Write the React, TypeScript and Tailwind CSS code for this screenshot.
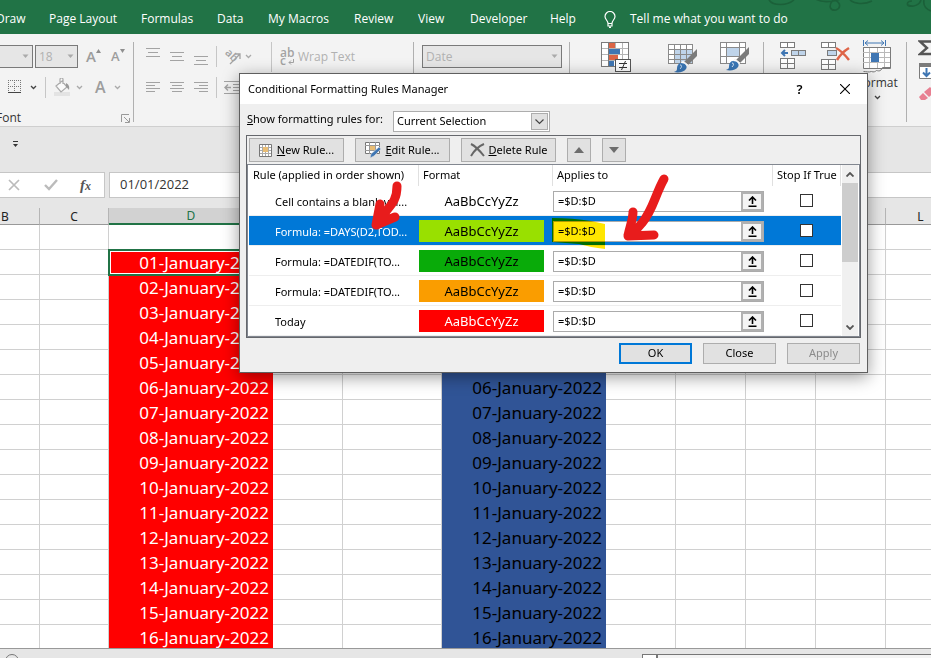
import React from 'react';
import clsx from 'clsx';

const rules = [
  { name: 'Cell contains a blank val...', swatch: 'bg-white text-black', selected: false },
  { name: 'Formula: =DAYS(D2,TOD...', swatch: 'bg-[#99e000] text-black', selected: true },
  { name: 'Formula: =DATEDIF(TO...', swatch: 'bg-[#09ab09] text-black', selected: false },
  { name: 'Formula: =DATEDIF(TO...', swatch: 'bg-[#fa9d00] text-black', selected: false },
  { name: 'Today', swatch: 'bg-[#ff0000] text-white', selected: false },
];

const dates = Array.from({ length: 16 }, (_, i) => `${String(i + 1).padStart(2, '0')}-January-2022`);

const tabs = ['Draw', 'Page Layout', 'Formulas', 'Data', 'My Macros', 'Review', 'View', 'Developer', 'Help'];

function Chevron({ dark = false }: { dark?: boolean }) {
  return (
    <svg width="7" height="5" viewBox="0 0 7 5" fill="none" stroke={dark ? '#444' : '#aaa'} strokeWidth="1.3">
      <path d="M1 1l2.5 2.5L6 1" />
    </svg>
  );
}

function SmallTriangle() {
  return (
    <svg className="pointer-events-none absolute right-1 top-[9px]" width="7" height="5" viewBox="0 0 7 5">
      <path d="M0.500 0.500h6L3.500 4z" fill="#aaa" />
    </svg>
  );
}

function Lines({ rows, top }: { rows: number[][]; top: number }) {
  return (
    <svg width="14" height="22" viewBox="0 0 14 22" stroke="#a3a3a3" shapeRendering="crispEdges">
      {rows.map(([a, b], i) => (
        <path key={i} d={`M${a} ${top + i * 4 - (rows.length > 3 ? i : 0)}.5H${b}`} />
      ))}
    </svg>
  );
}

function Brush() {
  return (
    <>
      <path d="M29 5v7l-9 9-4-3z" fill="#7b7b7b" />
      <path d="M15 17l5 4-2 2-5-4z" fill="#fff" stroke="#f3f3f3" />
      <path d="M13 19c4 0 7 3 5 6-2 3-7 4-12 3 3-1 3-2 3-4 0-3 2-5 4-5z" fill="#3a76b5" />
      <path d="M12 21c2 0 2 2 0 4" fill="none" stroke="#dce9f6" />
    </>
  );
}

function Separator() {
  return <div className="my-1 w-px shrink-0 self-stretch bg-[#b0b0b0]" />;
}

function FontGroup() {
  return (
    <section className="relative flex w-[133px] shrink-0 flex-col pt-[7px]" aria-label="Font">
      <div className="flex h-[23px]">
        <div className="relative w-[33px]">
          <select aria-label="Font name" className="block h-full w-full appearance-none border border-l-0 border-[#7a7a7a] bg-[#e6e6e6]" />
          <SmallTriangle />
        </div>
        <div className="relative ml-[2px] w-[43px]">
          <select aria-label="Font size" className="block h-full w-full appearance-none border border-[#7a7a7a] bg-[#e6e6e6] pl-[3px] text-xs text-[#b1b1b1]">
            <option>18</option>
          </select>
          <SmallTriangle />
        </div>
        <button aria-label="Increase font size" className="ml-2 flex items-center text-[15px] font-semibold text-[#9d9d9d]">
          A
          <svg className="mb-3" width="5" height="4" viewBox="0 0 5 4"><path d="M0 4L2.500 0 5 4z" fill="#8f8f8f" /></svg>
        </button>
        <button aria-label="Decrease font size" className="ml-[10px] flex items-center text-[13px] font-semibold text-[#9d9d9d]">
          A
          <svg className="mb-3" width="5" height="4" viewBox="0 0 5 4"><path d="M0 0h5L2.500 4z" fill="#8f8f8f" /></svg>
        </button>
      </div>
      <div className="mt-2 flex h-[22px] items-center pl-2">
        <button aria-label="Borders" className="flex items-center gap-[8px]">
          <svg width="14" height="14" viewBox="0 0 14 14" fill="none" stroke="#777" shapeRendering="crispEdges">
            <path d="M.5 0v13M6.500 0v13M12.500 0v13M0 .5h13M0 6.500h13" strokeDasharray="1 1" />
            <path d="M0 12.500h13" stroke="#444" />
          </svg>
          <Chevron dark />
        </button>
        <div className="ml-2 h-[21px] w-px bg-[#c6c6c6]" />
        <button aria-label="Fill colour" className="ml-2 flex items-center gap-[6px]">
          <svg width="16" height="18" viewBox="0 0 16 18">
            <path d="M0 14h16v4H0z" fill="#e3e3e3" />
            <path d="M2 8l6-5 5 6-6 5zM6 6V1.500a1.500 1.500 0 013 0V6" fill="#fafafa" stroke="#aaa" strokeWidth="1.200" />
            <path d="M12 5c2 1 4 3 3 7-1-1-2-3-3-3z" fill="#999" />
          </svg>
          <Chevron />
        </button>
        <button aria-label="Font colour" className="ml-[12px] flex items-center gap-[8px] text-base font-semibold text-[#9d9d9d]">
          A
          <Chevron />
        </button>
      </div>
      <div className="-ml-1 mt-3 flex h-4 items-center justify-between pr-[3px] text-xs text-[#333]">
        Font
        <svg width="9" height="9" viewBox="0 0 9 9" fill="none" stroke="#999">
          <path d="M.5 8V.5H8M3 3l5 5M8.500 4v4.500H4" />
        </svg>
      </div>
    </section>
  );
}

function AlignmentGroup() {
  return (
    <section className="flex w-[279px] shrink-0 flex-col pl-3 pt-[7px]" aria-label="Alignment">
      <div className="flex h-[23px] items-center">
        <button aria-label="Top align"><Lines top={2} rows={[[0, 14], [2, 12], [0, 14]]} /></button>
        <button aria-label="Middle align" className="ml-[10px]"><Lines top={6} rows={[[0, 14], [2, 12], [0, 14]]} /></button>
        <button aria-label="Bottom align" className="ml-[10px]"><Lines top={10} rows={[[0, 14], [2, 12], [0, 14]]} /></button>
        <div className="ml-2 h-[21px] w-px bg-[#c6c6c6]" />
        <button aria-label="Orientation" className="ml-[7px] flex items-center gap-[4px]">
          <svg width="17" height="17" viewBox="0 0 17 17" fill="none" stroke="#a3a3a3">
            <text x="1" y="8" transform="rotate(45 4 6)" fontSize="11" fontWeight="600" fill="#a3a3a3" stroke="none">ab</text>
            <path d="M6 16L15.500 6.500M11 6h5v5" strokeWidth="1.300" />
          </svg>
          <Chevron />
        </button>
        <div className="ml-[19px] h-[30px] w-px bg-[#c6c6c6]" />
        <button className="ml-[8px] flex items-center gap-1 text-xs text-[#b1b1b1]">
          <span className="relative w-[14px] text-left text-[12px] font-semibold leading-[8px] text-[#a3a3a3]">
            ab<br />c
            <svg className="absolute bottom-0 right-0" width="6" height="6" viewBox="0 0 6 6" fill="none" stroke="#a3a3a3"><path d="M5.500 0v3.500H1M3 1.500l-2 2 2 2" /></svg>
          </span>
          Wrap Text
        </button>
      </div>
      <div className="mt-2 flex h-[22px] items-center">
        <button aria-label="Align left"><Lines top={6} rows={[[0, 14], [0, 9], [0, 14], [0, 9]]} /></button>
        <button aria-label="Centre" className="ml-[10px]"><Lines top={6} rows={[[0, 14], [2, 12], [0, 14], [2, 12]]} /></button>
        <button aria-label="Align right" className="ml-[10px]"><Lines top={6} rows={[[0, 14], [5, 14], [0, 14], [5, 14]]} /></button>
        <div className="ml-2 h-[21px] w-px bg-[#c6c6c6]" />
        <button aria-label="Decrease indent" className="ml-[7px]">
          <svg width="17" height="13" viewBox="0 0 17 13" fill="none" stroke="#a3a3a3">
            <path d="M0 .5h17M9 3.500h8M9 6.500h8M9 9.500h8M0 12.500h17" shapeRendering="crispEdges" />
            <path d="M7 6.500H1M4 3.500l-3 3 3 3" strokeWidth="1.500" />
          </svg>
        </button>
      </div>
    </section>
  );
}

function StylesGroup() {
  return (
    <section className="flex w-[193px] shrink-0 items-start pl-[31px] pt-1" aria-label="Styles">
      <button aria-label="Conditional Formatting">
        <svg width="31" height="31" viewBox="0 0 31 31" shapeRendering="crispEdges">
          <path d="M.5.5h27v24H.5z" fill="#fff" stroke="#7b7b7b" />
          <path d="M7.500 0v25M14.500 0v25M21.500 0v25M0 6.500h28M0 12.500h28M0 18.500h28" stroke="#b5b5b5" />
          <path d="M.5.5h27v24H.5zM7.500 0v25" fill="none" stroke="#7b7b7b" />
          <path d="M8 1h6v5H8zM8 13h9v5H8z" fill="#dc6445" />
          <path d="M8 7h11v5H8zM8 19h5v5H8z" fill="#3f76b3" />
          <path d="M14.500 17.500h15v12h-15z" fill="#fff" stroke="#555" />
          <path d="M18 21.500h8M18 25.500h8" stroke="#333" />
          <path d="M24.500 19l-4 9" stroke="#333" shapeRendering="auto" />
        </svg>
      </button>
      <button aria-label="Format as Table" className="ml-9 mt-[2px]">
        <svg width="30" height="29" viewBox="0 0 30 29">
          <path d="M.5.5h24v19H.5z" fill="#fff" />
          <path d="M6.500 5.500h18v14h-18z" fill="#bfd4ea" />
          <path d="M.5.5h24v19H.5zM6.500 0v20M12.500 0v20M18.500 0v20M0 5.500h25M0 10.500h25M0 15.500h25" fill="none" stroke="#8a8a8a" shapeRendering="crispEdges" />
          <Brush />
        </svg>
      </button>
      <button aria-label="Cell Styles" className="ml-[22px]">
        <svg width="30" height="29" viewBox="0 0 30 29">
          <path d="M.5.5h25v21H.5z" fill="#fff" />
          <path d="M6.500 5.500h13v9h-13z" fill="#bfd4ea" />
          <path d="M.5.5h25v21H.5zM6.500 0v21M19.500 0v21M0 5.500h25M0 14.500h25" fill="none" stroke="#8a8a8a" shapeRendering="crispEdges" />
          <Brush />
        </svg>
      </button>
    </section>
  );
}

function CellsGroup() {
  return (
    <section className="flex w-[142px] shrink-0 items-start pl-4 pt-1" aria-label="Cells">
      <button aria-label="Insert cells">
        <svg width="27" height="28" viewBox="0 0 27 28" fill="#fff" stroke="#7b7b7b" shapeRendering="crispEdges">
          <path d="M.5.5h14v5H.5zM7.500.5v5M.5 16.500h14v10H.5zM7.500 16.500v10M.5 21.500h14" />
          <path d="M11.500 8.500h14v5h-14z" fill="#bfd4ea" />
          <path d="M18.500 8.500v5" />
          <path d="M8 11H2M5 8l-3 3 3 3" fill="none" stroke="#3f76b3" strokeWidth="2" shapeRendering="auto" />
        </svg>
      </button>
      <button aria-label="Delete cells" className="ml-[14px]">
        <svg width="30" height="28" viewBox="0 0 30 28" fill="#fff" stroke="#7b7b7b" shapeRendering="crispEdges">
          <path d="M.5.5h14v5H.5zM7.500.5v5M.5 17.500h14v10H.5zM7.500 17.500v10M.5 22.500h14" />
          <path d="M6.500 8.500h9v5h-9z" fill="#bfd4ea" />
          <path d="M15 6c4 2 9 7 13 12M28 6c-5 3-9 7-12 12" fill="none" stroke="#de6548" strokeWidth="2.500" shapeRendering="auto" />
        </svg>
      </button>
      <button className="-mt-[2px] ml-2 flex w-[37px] flex-col items-center text-xs text-[#333]">
        <svg width="29" height="33" viewBox="0 0 29 33" fill="none" stroke="#7b7b7b">
          <path d="M.5 0v6M22.500 0v6M2 3h19M5 .5L2 3l3 2.500M18 .5L21 3l-3 2.500" stroke="#3f76b3" />
          <path d="M.5 7.500h27v21H.5z" fill="#fff" />
          <path d="M6.500 7v21M21.500 7v21M14.500 7v21M0 12.500h28M0 22.500h28M0 17.500h28" stroke="#b9b9b9" shapeRendering="crispEdges" />
          <path d="M8 13h8v9H8z" fill="#3f76b3" stroke="none" />
          <path d="M.5 7.500h27v20h-8c-2 5-5 3-6 3-1 1-3 2-5 1-3 1-5 0-8 0" fill="none" />
        </svg>
        <span className="mb-1 mt-[2px]">Format</span>
        <Chevron dark />
      </button>
    </section>
  );
}

function EditingGroup() {
  return (
    <section className="flex flex-1 flex-col items-start gap-[7px] overflow-hidden pl-[11px] pt-[2px]" aria-label="Editing">
      <button aria-label="AutoSum">
        <svg width="17" height="16" viewBox="0 0 17 16" fill="none" stroke="#555" strokeWidth="2.400">
          <path d="M15 4V1.500H2L9 8l-7 6h13v-3" />
        </svg>
      </button>
      <button aria-label="Fill" className="ml-px">
        <svg width="17" height="17" viewBox="0 0 17 17" fill="none">
          <path d="M.5.500h16v15H.5z" fill="#fff" stroke="#7b7b7b" />
          <path d="M0 0h17v4H0z" fill="#7b7b7b" />
          <path d="M7.500 5v8M4 9.500l3.500 3.500L11 9.500" stroke="#3f76b3" strokeWidth="2" />
        </svg>
      </button>
      <button aria-label="Clear" className="ml-px">
        <svg width="17" height="15" viewBox="0 0 17 15">
          <path d="M5 5l6-5 5 5-6 5z" fill="#e87f91" />
          <path d="M0 10l4-4 5 5-3 2H2z" fill="#e87f91" />
        </svg>
      </button>
    </section>
  );
}

function Ribbon() {
  return (
    <div className="flex h-[93px] shrink-0 overflow-hidden border-b border-[#cfcfcf] bg-[#f3f3f3] pt-1">
      <FontGroup />
      <Separator />
      <AlignmentGroup />
      <Separator />
      <section className="w-[155px] shrink-0 px-2 pt-[7px]" aria-label="Number">
        <div className="relative h-[23px] w-[140px]">
          <select aria-label="Number format" className="block h-full w-full appearance-none border border-[#7a7a7a] bg-[#e6e6e6] pl-[3px] text-xs text-[#b1b1b1]">
            <option>Date</option>
          </select>
          <SmallTriangle />
        </div>
      </section>
      <Separator />
      <StylesGroup />
      <Separator />
      <CellsGroup />
      <Separator />
      <EditingGroup />
    </div>
  );
}

function TabBar() {
  return (
    <header className="relative flex h-[34px] shrink-0 overflow-hidden bg-[#217346] pt-1 text-xs text-white">
      <svg className="absolute right-0 top-0" width="165" height="18" viewBox="0 0 165 18" fill="none" stroke="#1b6039" strokeWidth="1.600">
        <path d="M3 0c4 6 18 6 25 0M48 -2c8 6 22 4 34-2M84 0c4 4 14 5 22 1M67 0c-5 6-3 11 3 10 5-2 5-7-1-10" />
        <path d="M142 5c6 3 12-1 13-5M146 1c-6 0-6 6-1 5M158 0c-1 5 2 9 7 11" />
      </svg>
      <nav className="relative -ml-1 grid grid-cols-[53px_92px_76px_51px_86px_64px_52px_80px_54px] items-center">
        {tabs.map((tab) => (
          <button key={tab} className="whitespace-nowrap text-left">{tab}</button>
        ))}
      </nav>
      <button className="relative flex items-center gap-[14px]">
        <svg width="12" height="17" viewBox="0 0 12 17" fill="none" stroke="#fff" strokeWidth="1.200">
          <path d="M4 12.500c0-3-3-4-3-7a5 5 0 0110 0c0 3-3 4-3 7zM4 12.500v2.500h4v-2.500M5 16.400h2" />
        </svg>
        Tell me what you want to do
      </button>
    </header>
  );
}

function FormulaBar() {
  return (
    <div className="flex h-[26px] shrink-0 gap-1">
      <div className="flex w-[105px] items-center border border-l-0 border-[#c6c6c6] bg-white pl-2">
        <button aria-label="Cancel">
          <svg width="12" height="12" viewBox="0 0 12 12" stroke="#bbb" strokeWidth="1.700"><path d="M1 1l10 10M11 1L1 11" /></svg>
        </button>
        <button aria-label="Enter" className="ml-6">
          <svg width="14" height="12" viewBox="0 0 14 12" fill="none" stroke="#bbb" strokeWidth="2.400"><path d="M1 6l4 4 8-9" /></svg>
        </button>
        <button aria-label="Insert function" className="ml-[22px] font-['Liberation_Serif',serif] text-[15px] font-bold italic leading-none text-[#555]">
          f<span className="text-[12px]">x</span>
        </button>
      </div>
      <input aria-label="Formula bar" defaultValue="01/01/2022" className="min-w-0 flex-1 border border-r-0 border-[#c6c6c6] bg-white px-[10px] text-[13px] text-[#333]" />
    </div>
  );
}

function Sheet() {
  const line = 'border-b border-r border-[#d0d0d0]';
  const head = 'h-[17px] border-b border-r border-b-[#999] border-r-[#b5b5b5] font-normal';
  return (
    <div className="mt-[10px] min-h-0 flex-1 overflow-hidden">
      <table className="w-[956px] table-fixed border-separate border-spacing-0 bg-white">
        <colgroup>
          <col className="w-[40px]" />
          <col className="w-[69px]" />
          <col className="w-[164px]" />
          <col className="w-[70px]" />
          <col className="w-[99px]" />
          <col className="w-[164px]" />
          <col className="w-[70px]" />
          <col className="w-[70px]" />
          <col className="w-[70px]" />
          <col className="w-[70px]" />
          <col className="w-[70px]" />
        </colgroup>
        <thead className="bg-[#e6e6e6] text-xs leading-[15px] text-[#222]">
          <tr>
            <th className={clsx(head, 'pl-px text-left')}>B</th>
            <th className={head}>C</th>
            <th className="border-b-2 border-[#217346] bg-[#d2d2d2] font-normal text-[#217346]">D</th>
            {['E', 'F', 'G', 'H', 'I', 'J', 'K', 'L'].map((c) => (
              <th key={c} className={head}>{c}</th>
            ))}
          </tr>
        </thead>
        <tbody className="text-[17px] leading-6">
          {['', ...dates].map((date, i) => (
            <tr key={i} className="h-[25px]">
              <td className={line} />
              <td className={line} />
              <td
                className={clsx(
                  'p-0 pr-1 text-right text-white',
                  date ? 'bg-[#ff0000]' : line,
                  i === 1 && 'relative outline-2 -outline-offset-1 outline-[#217346] shadow-[inset_0_0_0_2px_white]'
                )}
              >
                {date}
              </td>
              <td className={line} />
              <td className={line} />
              <td className={clsx('p-0 pr-1 text-right text-black', date ? 'bg-[#305496]' : line)}>{date}</td>
              <td className={line} />
              <td className={line} />
              <td className={line} />
              <td className={line} />
              <td className={line} />
            </tr>
          ))}
        </tbody>
      </table>
    </div>
  );
}

const toolButton = 'flex h-6 items-center justify-center border border-[#adadad] bg-[#e1e1e1]';

function RuleGridIcon({ pencil = false }: { pencil?: boolean }) {
  if (pencil) {
    return (
      <svg width="16" height="16" viewBox="0 0 16 16">
        <path d="M.5.500h14v11H.5z" fill="#fff" stroke="#777" />
        <path d="M5 4h6v4H5z" fill="#e9bd74" />
        <path d="M4.500 0v12M10.500 0v12M0 3.500h15M0 8.500h15" stroke="#999" shapeRendering="crispEdges" />
        <path d="M14 5l2 2-7 7-4 2 1-4z" fill="#3f76b3" stroke="#e1e1e1" strokeWidth=".6" />
      </svg>
    );
  }
  return (
    <svg width="13" height="13" viewBox="0 0 13 13">
      <path d="M.5.500h12v12H.5z" fill="#fff" stroke="#777" />
      <path d="M3.500 1v11M6.500 1v11M9.500 1v11M1 3.500h11M1 6.500h11M1 9.500h11" stroke="#aaa" shapeRendering="crispEdges" />
      <path d="M4 3h5v5H4z" fill="#e9bd74" />
    </svg>
  );
}

function RulesDialog() {
  const cell = 'border-b border-[#eee] align-top';
  return (
    <div
      role="dialog"
      aria-label="Conditional Formatting Rules Manager"
      className="absolute left-[239px] top-[73px] z-20 w-[629px] border border-[#5f5f5f] bg-[#efefef] text-[11px] text-black shadow-[0_4px_16px_rgba(0,0,0,0.4)]"
    >
      <div className="flex h-[30px] items-center bg-white pl-2">
        <h1 className="flex-1">Conditional Formatting Rules Manager</h1>
        <button aria-label="Help" className="w-[45px] text-[13px] font-semibold leading-none">?</button>
        <button aria-label="Close window" className="flex w-[45px] justify-center">
          <svg width="10" height="10" viewBox="0 0 10 10" stroke="#000" strokeWidth="1.100"><path d="M0 0l10 10M10 0L0 10" /></svg>
        </button>
      </div>
      <div className="px-[6px]">
        <div className="flex pb-[3px] pt-[7px]">
          <label htmlFor="scope" className="w-[147px] whitespace-nowrap pl-px leading-4"><u>S</u>how formatting rules for:</label>
          <div className="relative h-[21px] w-[157px]">
            <select id="scope" className="block h-full w-full appearance-none border border-[#adadad] bg-white pl-[3px]">
              <option>Current Selection</option>
            </select>
            <span className="pointer-events-none absolute right-[2px] top-[2px] flex h-[17px] w-[17px] items-center justify-center border border-[#adadad] bg-[#e1e1e1]">
              <svg width="9" height="6" viewBox="0 0 9 6" fill="none" stroke="#444" strokeWidth="1.200"><path d="M.5.500l4 4 4-4" /></svg>
            </span>
          </div>
        </div>
        <div className="border border-[#65676c]">
          <div className="flex gap-[11px] px-[2px] py-[2px]">
            <button className={clsx(toolButton, 'w-[95px] gap-[5px]')}><RuleGridIcon /><span><u>N</u>ew Rule...</span></button>
            <button className={clsx(toolButton, 'w-[95px] gap-1')}><RuleGridIcon pencil /><span><u>E</u>dit Rule...</span></button>
            <button className={clsx(toolButton, 'w-[95px] gap-1')}>
              <svg width="15" height="14" viewBox="0 0 15 14" fill="none" stroke="#666" strokeWidth="2"><path d="M1 1c4 2 9 7 13 12M14 1C9 3 4 8 1 13" /></svg>
              <span><u>D</u>elete Rule</span>
            </button>
            <button aria-label="Move up" className={clsx(toolButton, 'w-6')}>
              <svg width="10" height="6" viewBox="0 0 10 6"><path d="M0 6l5-6 5 6z" fill="#6d6d6d" /></svg>
            </button>
            <button aria-label="Move down" className={clsx(toolButton, 'w-6')}>
              <svg width="10" height="6" viewBox="0 0 10 6"><path d="M0 0h10L5 6z" fill="#6d6d6d" /></svg>
            </button>
          </div>
          <div className="flex justify-between border border-[#828790] bg-white px-px">
            <table className="w-[592px] table-fixed border-separate border-spacing-0 text-left">
              <colgroup>
                <col className="w-[169px]" />
                <col className="w-[134px]" />
                <col className="w-[220px]" />
                <col className="w-[69px]" />
              </colgroup>
              <thead className="whitespace-nowrap">
                <tr className="h-[21px]">
                  <th className="pl-1 font-normal">Rule (applied in order shown)</th>
                  <th className="border-l border-[#e0e0e0] pl-1 font-normal">Format</th>
                  <th className="border-l border-[#e0e0e0] pl-1 font-normal">Applies to</th>
                  <th className="border-x border-[#e0e0e0] pl-1 font-normal">Stop If True</th>
                </tr>
              </thead>
              <tbody>
                {rules.map((rule, i) => (
                  <tr key={i} className={clsx('h-[30px]', rule.selected && 'bg-[#0078d7] text-white')}>
                    <td className={clsx(cell, 'whitespace-nowrap pl-[26px] pt-2 leading-4')}>{rule.name}</td>
                    <td className={clsx(cell, 'pl-px pt-1')}>
                      <div className={clsx('h-[22px] w-[125px] text-center text-[13px] leading-[22px]', rule.swatch)}>AaBbCcYyZz</div>
                    </td>
                    <td className={clsx(cell, 'pl-px pt-[5px]')}>
                      <div className="flex h-[21px] w-[211px] border border-[#ababab] bg-white text-black">
                        <input aria-label={`Applies to, rule ${i + 1}`} defaultValue="=$D:$D" className="min-w-0 flex-1 px-1" />
                        <button aria-label="Collapse dialog" className="flex w-[22px] items-center justify-center border-2 border-[#b0b0b0] bg-[#f4f4f4]">
                          <svg width="9" height="11" viewBox="0 0 9 11" fill="none" stroke="#000" strokeWidth="1.600"><path d="M4.500 8V1M1 4.500L4.500 1 8 4.500M.5 10.200h8" /></svg>
                        </button>
                      </div>
                    </td>
                    <td className={clsx(cell, 'pt-2')}>
                      <input type="checkbox" aria-label={`Stop if true, rule ${i + 1}`} className="mx-auto block size-[13px] appearance-none border border-[#333] bg-white" />
                    </td>
                  </tr>
                ))}
              </tbody>
            </table>
            <div className="flex w-4 flex-col items-center bg-[#f0f0f0]">
              <svg className="mb-[6px] mt-[7px]" width="8" height="5" viewBox="0 0 8 5" fill="none" stroke="#555" strokeWidth="1.800"><path d="M.5 4.500L4 1l3.500 3.500" /></svg>
              <div className="h-[79px] w-full bg-[#cdcdcd]" />
              <svg className="mb-[6px] mt-auto" width="8" height="5" viewBox="0 0 8 5" fill="none" stroke="#555" strokeWidth="1.800"><path d="M.5.500L4 4 7.500.500" /></svg>
            </div>
          </div>
        </div>
        <div className="flex justify-end gap-[11px] pb-2 pr-px pt-[5px]">
          <button className="h-[21px] w-[73px] border-2 border-[#0078d7] bg-[#e1e1e1]">OK</button>
          <button className="h-[21px] w-[73px] border border-[#adadad] bg-[#e1e1e1]">Close</button>
          <button disabled className="h-[21px] w-[73px] border border-[#adadad] bg-[#e1e1e1] text-[#8b8b8b]">Apply</button>
        </div>
      </div>
      <svg className="pointer-events-none absolute -left-px -top-px mix-blend-multiply" width="629" height="300" viewBox="239 73 629 300">
        <path d="M552 218c14 0 27 1 39 3l14 3v25c-10-1-18-3-26-5l-27-2z" fill="#ffe600" />
      </svg>
      <svg className="pointer-events-none absolute -left-px -top-px" width="629" height="300" viewBox="239 73 629 300" fill="none" stroke="#e81c1c" strokeWidth="9" strokeLinecap="round" strokeLinejoin="round">
        <path d="M397 186c0 12-4 17-10 24l-10 15M380 204l-4 21 19-8" />
        <path d="M664 179c-9 16-11 31-22 44-4 5-8 10-14 12M633 212c0 8-4 17-5 24l26-1" />
      </svg>
    </div>
  );
}

export default function App() {
  return (
    <div className="relative flex h-screen flex-col overflow-hidden bg-[#e6e6e6] font-['Open_Sans','Noto_Sans',sans-serif]">
      <TabBar />
      <Ribbon />
      <div className="h-[45px] shrink-0 pl-3 pt-[14px]">
        <button aria-label="Customise Quick Access Toolbar" className="block">
          <svg width="7" height="7" viewBox="0 0 7 7"><path d="M1 .500h5" stroke="#333" /><path d="M1 3h5L3.500 6z" fill="#333" /></svg>
        </button>
      </div>
      <FormulaBar />
      <div className="contents font-['Noto_Sans',sans-serif]">
        <Sheet />
      </div>
      <footer className="flex h-[10px] shrink-0 justify-between overflow-hidden border-t border-[#999] pl-[5px] pt-[5px]">
        <button aria-label="New sheet" className="size-[14px] shrink-0 rounded-full border border-[#777]" />
        <div className="ml-auto h-4 w-[289px] border border-r-0 border-[#777] bg-white">
          <div className="ml-[13px] h-full border-l-2 border-[#777] bg-[#f4f4f4]" />
        </div>
      </footer>
      <div className="contents font-['Noto_Sans',sans-serif]">
        <RulesDialog />
      </div>
    </div>
  );
}
